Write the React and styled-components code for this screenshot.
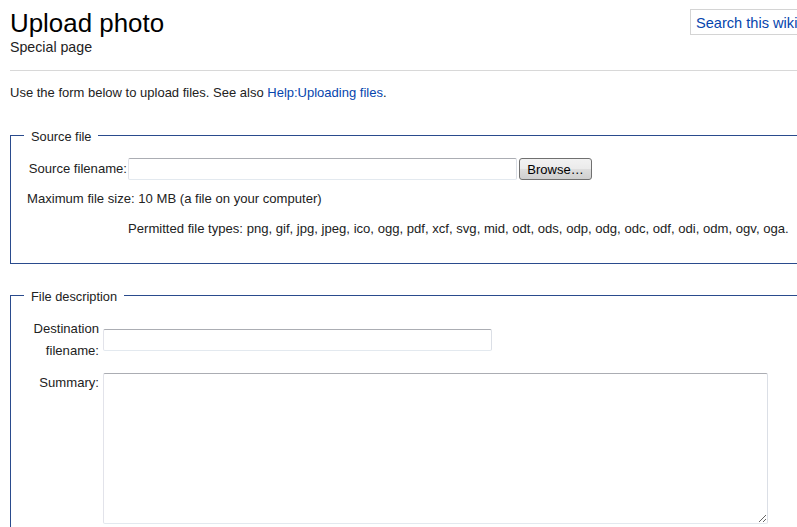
import React from "react";
import styled, { createGlobalStyle } from "styled-components";

const GlobalStyle = createGlobalStyle`
  html, body {
    margin: 0;
    padding: 0;
    background: #fff;
    overflow: hidden;
  }
  body {
    font-family: "Liberation Sans", Arial, sans-serif;
    color: #222;
  }
`;

const Page = styled.div`
  width: 860px;
  padding-left: 10px;
  box-sizing: border-box;
`;

const Header = styled.div`
  display: flex;
  align-items: flex-start;
`;

const TitleBlock = styled.div`
  flex: 0 0 680px;
`;

const Title = styled.h1`
  margin: 10px 0 0;
  font-size: 25.9px;
  line-height: 26px;
  font-weight: normal;
  color: #000;
`;

const Subtitle = styled.div`
  margin-top: 1px;
  font-size: 14.2px;
  line-height: 20px;
  color: #222;
`;

const SearchBox = styled.div`
  margin-top: 9px;
  height: 26px;
  padding: 2px 5px 0;
  border: 1px solid #d4d4d4;
  box-sizing: border-box;
  font-size: 14.6px;
  line-height: 22px;
  color: #0645ad;
  white-space: nowrap;
`;

const Rule = styled.hr`
  margin: 13px 0 0;
  border: 0;
  height: 1px;
  background: #d8d8d8;
`;

const Intro = styled.p`
  margin: 12px 0 0;
  font-size: 13px;
  line-height: 19px;
`;

const Link = styled.a`
  color: #0645ad;
  text-decoration: none;
`;

const Fieldset = styled.fieldset`
  margin: ${(p) => p.$top}px 0 0;
  padding: 0 16px ${(p) => p.$bottom}px;
  border: 1px solid #2a4b8d;
  min-width: 0;
`;

const Legend = styled.legend`
  margin-left: -3px;
  padding: 3px 7px 0;
  font-size: 12.8px;
  line-height: 19px;
  color: #222;
`;

const FormGrid = styled.div`
  display: grid;
  grid-template-columns: ${(p) => p.$label}px 1fr;
  column-gap: ${(p) => p.$colGap}px;
  row-gap: ${(p) => p.$gap}px;
  align-items: center;
  padding-top: 12px;
  font-size: 13.1px;
  line-height: 19px;
`;

const Label = styled.label`
  text-align: right;
  line-height: ${(p) => (p.$tall ? "22px" : "19px")};
  align-self: ${(p) => (p.$top ? "start" : "center")};
`;

const Wide = styled.div`
  grid-column: 1 / -1;
`;

const Note = styled.div`
  grid-column: 2;
  padding-top: 2px;
  white-space: nowrap;
`;

const FileRow = styled.div`
  display: flex;
  align-items: center;
  gap: 2px;
`;

const TextInput = styled.input`
  width: ${(p) => p.$w}px;
  height: 22px;
  box-sizing: border-box;
  margin: 0;
  padding: 1px 3px;
  border: 1px solid;
  border-color: #abadb3 #dbdfe6 #e3e9ef #e2e3ea;
  border-radius: 2px;
  font: inherit;
  background: #fff;
`;

const BrowseButton = styled.button`
  width: 73px;
  height: 22px;
  margin: 0;
  padding: 0;
  border: 1px solid #707070;
  border-radius: 3px;
  background: linear-gradient(#f2f2f2 0%, #ebebeb 48%, #dddddd 52%, #cfcfcf 100%);
  font-family: "Liberation Sans", Arial, sans-serif;
  font-size: 13px;
  color: #000;
`;

const TextArea = styled.textarea`
  display: block;
  width: 665px;
  height: 151px;
  box-sizing: border-box;
  margin: 0;
  border: 1px solid;
  border-color: #abadb3 #dbdfe6 #e3e9ef #e2e3ea;
  border-radius: 2px;
  font: inherit;
  resize: both;
`;

const fileTypes =
  "png, gif, jpg, jpeg, ico, ogg, pdf, xcf, svg, mid, odt, ods, odp, odg, odc, odf, odi, odm, ogv, oga.";

export default function App() {
  return (
    <>
      <GlobalStyle />
      <Page>
        <Header>
          <TitleBlock>
            <Title>Upload photo</Title>
            <Subtitle>Special page</Subtitle>
          </TitleBlock>
          <SearchBox>Search this wiki</SearchBox>
        </Header>
        <Rule />
        <Intro>
          Use the form below to upload files. See also{" "}
          <Link href="#">Help:Uploading files</Link>.
        </Intro>

        <Fieldset $top={22} $bottom={25}>
          <Legend>Source file</Legend>
          <FormGrid $label={100} $colGap={1} $gap={9}>
            <Label $tall>Source filename:</Label>
            <FileRow>
              <TextInput type="text" $w={389} />
              <BrowseButton type="button">Browse…</BrowseButton>
            </FileRow>
            <Wide>Maximum file size: 10 MB (a file on your computer)</Wide>
            <Note>Permitted file types: {fileTypes}</Note>
          </FormGrid>
        </Fieldset>

        <Fieldset $top={20} $bottom={20}>
          <Legend>File description</Legend>
          <FormGrid $label={72} $colGap={4} $gap={11}>
            <Label $tall>Destination filename:</Label>
            <div>
              <TextInput type="text" $w={389} />
            </div>
            <Label $top>Summary:</Label>
            <TextArea />
          </FormGrid>
        </Fieldset>
      </Page>
    </>
  );
}
